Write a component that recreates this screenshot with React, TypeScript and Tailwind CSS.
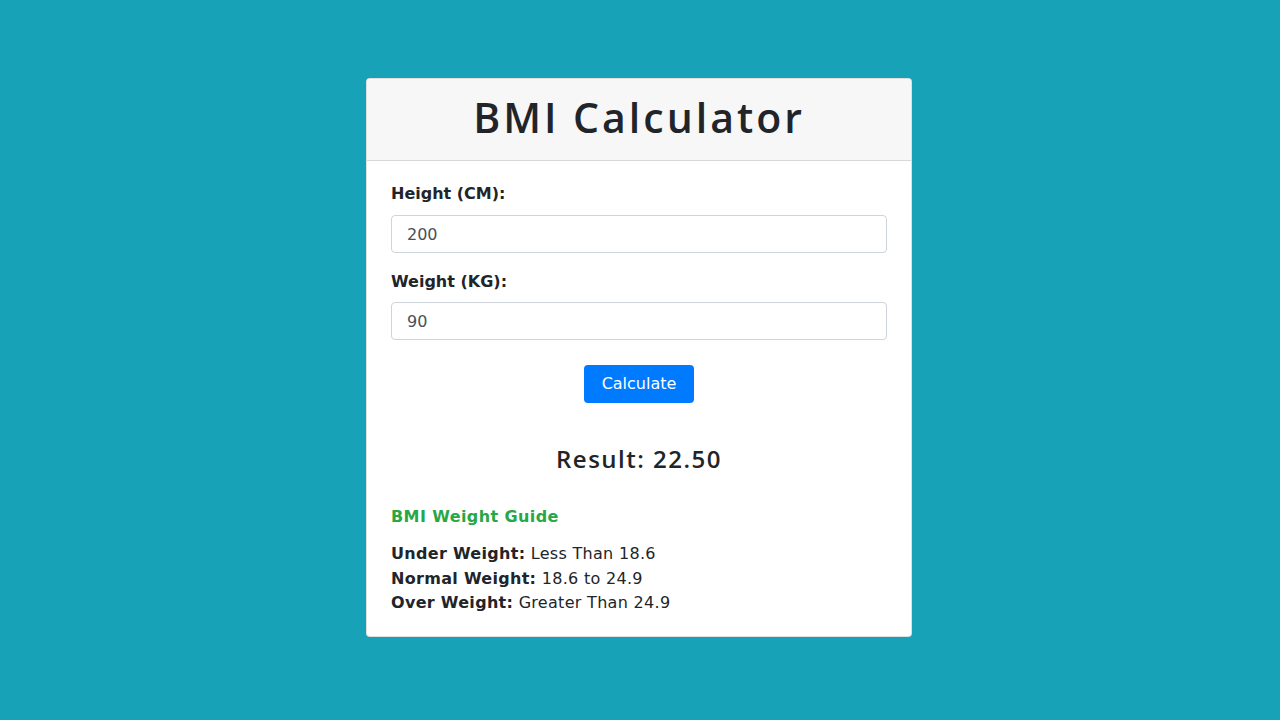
import React, { useState } from 'react';

export default function App() {
  const [height, setHeight] = useState('200');
  const [weight, setWeight] = useState('90');
  const [result, setResult] = useState('22.50');

  const calculate = () => {
    const h = parseFloat(height) / 100;
    const w = parseFloat(weight);
    if (!h || !w) return;
    setResult((w / (h * h)).toFixed(2));
  };

  return (
    <div
      className="min-h-screen w-full bg-[#17a2b8] flex justify-center pt-[78px] pr-[2px] text-[#212529]"
      style={{ fontFamily: '"DejaVu Sans", "Open Sans", Arial, sans-serif' }}
    >
      <div className="w-[546px] h-fit bg-white rounded-[4px] border border-[rgba(0,0,0,0.125)] overflow-hidden">
        <div className="h-[82px] pb-[4px] bg-[#f7f7f7] border-b border-[rgba(0,0,0,0.125)] flex items-center justify-center">
          <h1 className="font-['Open_Sans',sans-serif] text-[41px] font-semibold tracking-[3px] leading-none">BMI Calculator</h1>
        </div>

        <div className="px-[24px] pt-[21px] pb-[20px]">
          <label className="block text-[16px] font-bold leading-[24px] mb-[9px]">Height (CM):</label>
          <input
            value={height}
            onChange={(e) => setHeight(e.target.value)}
            className="block w-full h-[38px] px-[15px] text-[16px] text-[#495057] border border-[#ced4da] rounded-[4px] outline-none"
          />

          <label className="block text-[16px] font-bold leading-[24px] mt-[17px] mb-[8px]">Weight (KG):</label>
          <input
            value={weight}
            onChange={(e) => setWeight(e.target.value)}
            className="block w-full h-[38px] px-[15px] text-[16px] text-[#495057] border border-[#ced4da] rounded-[4px] outline-none"
          />

          <div className="flex justify-center mt-[25px]">
            <button
              onClick={calculate}
              className="w-[110px] h-[38px] bg-[#007bff] text-white text-[16px] rounded-[4px]"
            >
              Calculate
            </button>
          </div>

          <div className="text-center font-['Open_Sans',sans-serif] text-[24px] font-semibold tracking-[1.5px] leading-[29px] mt-[41px]">
            Result: {result}
          </div>

          <div className="text-[16px] font-bold text-[#28a745] tracking-[0.4px] leading-[24px] mt-[32px]">BMI Weight Guide</div>

          <div className="mt-[13px] text-[16px] tracking-[0.3px] leading-[24.5px]">
            <div><span className="font-bold">Under Weight:</span> Less Than 18.6</div>
            <div><span className="font-bold">Normal Weight:</span> 18.6 to 24.9</div>
            <div><span className="font-bold">Over Weight:</span> Greater Than 24.9</div>
          </div>
        </div>
      </div>
    </div>
  );
}
